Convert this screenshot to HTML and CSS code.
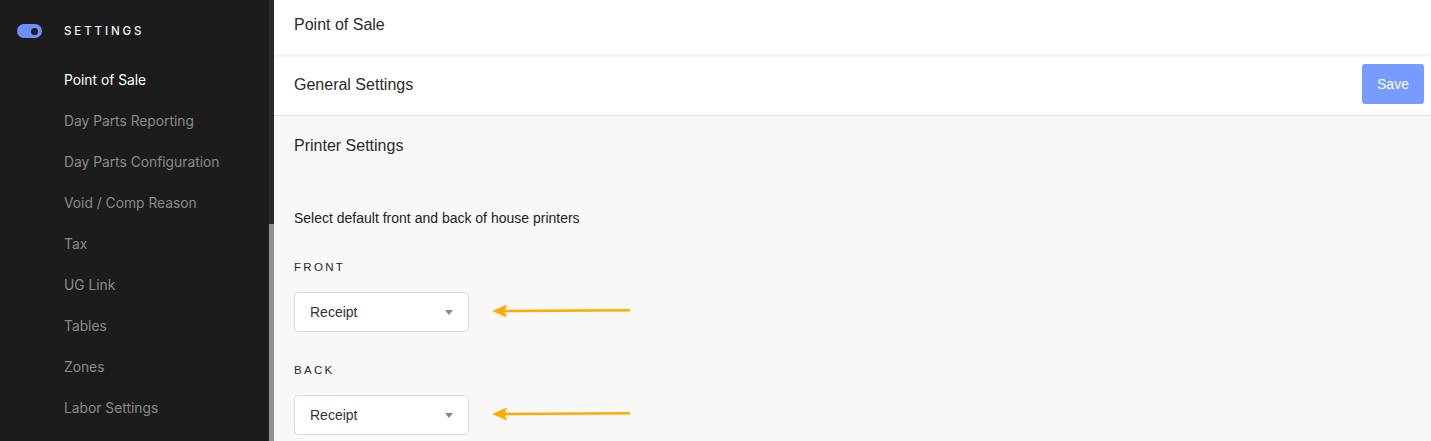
FILE: index.html
```html
<!DOCTYPE html>
<html>
<head>
<meta charset="utf-8">
<link rel="stylesheet" href="styles.css">
</head>
<body>
<div class="app">
  <aside class="sidebar">
    <div class="side-scroll">
      <div class="side-head">
        <span class="toggle"><span class="knob"></span></span>
        <span class="side-title">SETTINGS</span>
      </div>
      <nav class="nav">
        <a class="nav-item active">Point of Sale</a>
        <a class="nav-item">Day Parts Reporting</a>
        <a class="nav-item">Day Parts Configuration</a>
        <a class="nav-item">Void / Comp Reason</a>
        <a class="nav-item">Tax</a>
        <a class="nav-item">UG Link</a>
        <a class="nav-item">Tables</a>
        <a class="nav-item">Zones</a>
        <a class="nav-item">Labor Settings</a>
      </nav>
    </div>
    <div class="scrollbar"><div class="thumb"></div></div>
  </aside>
  <main class="main">
    <header class="top">Point of Sale</header>
    <div class="bar">
      <span class="bar-title">General Settings</span>
      <button class="save">Save</button>
    </div>
    <section class="panel">
      <h2 class="panel-title">Printer Settings</h2>
      <p class="hint">Select default front and back of house printers</p>
      <div class="field">
        <div class="label">FRONT</div>
        <div class="row">
          <div class="select"><span>Receipt</span><span class="caret"></span></div>
          <svg class="arrow" width="140" height="16" viewBox="0 0 140 16"><path d="M0 8 L15 1.5 L13 6.8 L138 6.1 L138 8.5 L13 9.2 L15 14.5 Z" fill="#ffab00"/></svg>
        </div>
      </div>
      <div class="field">
        <div class="label">BACK</div>
        <div class="row">
          <div class="select"><span>Receipt</span><span class="caret"></span></div>
          <svg class="arrow" width="140" height="16" viewBox="0 0 140 16"><path d="M0 8 L15 1.5 L13 6.8 L138 6.1 L138 8.5 L13 9.2 L15 14.5 Z" fill="#ffab00"/></svg>
        </div>
      </div>
    </section>
  </main>
</div>
</body>
</html>
```
FILE: styles.css
```css
* { box-sizing: border-box; }
html, body { margin: 0; height: 100%; }
body { font-family: "Liberation Sans", Arial, sans-serif; background: #f8f8f8; overflow: hidden; }
.app { display: flex; height: 441px; }

.sidebar { width: 274px; flex: none; display: flex; background: #1c1c1c; }
.side-scroll { flex: 1; }
.scrollbar { width: 5px; background: #2a2a2a; display: flex; flex-direction: column; justify-content: flex-end; }
.thumb { height: 217px; background: #8e9196; }

.side-head { display: flex; align-items: center; padding: 24px 0 0 17px; height: 38px; }
.toggle { width: 25px; height: 14px; border-radius: 7px; background: #6e8ffa; position: relative; flex: none; }
.knob { position: absolute; right: 4px; top: 3.5px; width: 7px; height: 7px; border-radius: 50%; background: #1c1c1c; }
.side-title { margin-left: 22px; font-family: Inter, "Noto Sans", sans-serif; font-size: 11.5px; font-weight: 500; letter-spacing: 2.9px; color: #f2f2f2; }

.nav { display: flex; flex-direction: column; margin-top: 21px; }
.nav-item { height: 41px; display: flex; align-items: center; padding-left: 64px; font-family: Inter, "Noto Sans", sans-serif; font-size: 13.8px; color: #8a8a8a; }
.nav-item.active { color: #ffffff; }

.main { flex: 1; display: flex; flex-direction: column; min-width: 0; }
.top { height: 54px; background: #fff; padding-left: 20px; display: flex; align-items: center; font-size: 16px; color: #2a2a2a; box-shadow: 0 2px 4px rgba(0,0,0,0.07); position: relative; z-index: 1; padding-bottom: 4px; }
.bar { height: 62px; background: #fff; border-bottom: 1px solid #e3e3e3; display: flex; align-items: center; justify-content: space-between; padding: 0 7px 0 20px; }
.bar-title { font-size: 16px; color: #2a2a2a; }
.save { width: 62px; height: 40px; border: none; border-radius: 3px; background: #779bff; color: #fff; font-family: "Liberation Sans", Arial, sans-serif; font-size: 14px; margin-top: -1px; }

.panel { flex: 1; background: #f8f8f8; padding: 20px 20px 0; }
.panel-title { margin: 0; font-size: 16px; line-height: 20px; font-weight: 400; color: #2a2a2a; }
.hint { margin: 54px 0 0; font-size: 14px; line-height: 16px; color: #222; }
.field { margin-top: 34px; }
.field + .field { margin-top: 31px; }
.label { font-size: 11.5px; line-height: 14px; letter-spacing: 2.3px; color: #2a2a2a; }
.row { display: flex; align-items: center; margin-top: 18px; gap: 23px; }
.select { width: 175px; height: 40px; background: #fff; border: 1px solid #dcdcdc; border-radius: 4px; display: flex; align-items: center; justify-content: space-between; padding: 0 15px 0 15px; font-size: 14px; color: #333; }
.caret { width: 0; height: 0; border-left: 4px solid transparent; border-right: 4px solid transparent; border-top: 5px solid #8a8a8a; }
.arrow { flex: none; margin-top: -3px; }
```
